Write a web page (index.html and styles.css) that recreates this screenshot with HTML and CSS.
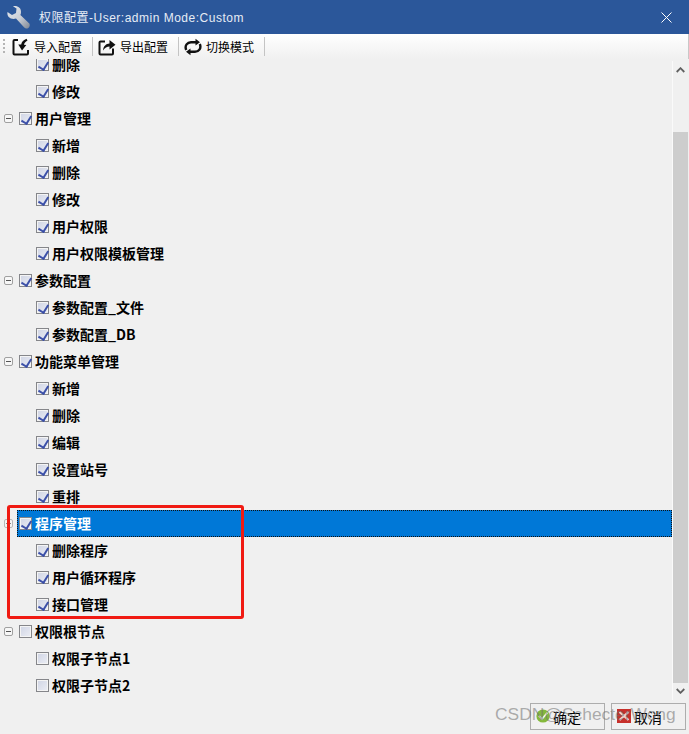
FILE: index.html
```html
<!DOCTYPE html>
<html lang="zh">
<head>
<meta charset="utf-8">
<title>权限配置</title>
<link rel="stylesheet" href="styles.css">
</head>
<body>
<div class="window">
  <header class="titlebar">
    <svg class="wrench" viewBox="0 0 25 25" width="25" height="25"><defs><linearGradient id="wr" x1="0" y1="0" x2="1" y2="1"><stop offset="0" stop-color="#e4e8ee"/><stop offset=".55" stop-color="#c9ced6"/><stop offset="1" stop-color="#7f8794"/></linearGradient></defs><path d="M1.5 7 L6 10 L10 8 L10.5 3.5 L7 1.2 C11 .2 15.5 2.5 15 7.5 C15 8.5 14.8 9.3 14.4 10 L23.3 18.5 C24.6 20.5 23 24 20 23.5 C19.2 23.3 18.6 22.9 18 22.3 L10 13.6 C5 15 .5 12 1.5 7 Z" fill="url(#wr)"/></svg>
    <span class="title">权限配置-User:admin Mode:Custom</span>
    <svg class="close" viewBox="0 0 11 11" width="11" height="11"><path d="M.5 .5 L10.5 10.5 M10.5 .5 L.5 10.5" stroke="#fff" stroke-width="1" fill="none"/></svg>
  </header>
  <nav class="toolbar">
    <span class="grip"></span>
    <span class="tool">
      <svg viewBox="0 0 18 18" width="18" height="18"><path d="M6 2 H2.5 Q1.5 2 1.5 3 V15.5 Q1.5 16.5 2.5 16.5 H15 Q16 16.5 16 15.5 V12" fill="none" stroke="#111" stroke-width="2"/><path d="M14.5 .8 C11 2.2 9.6 4.2 9.2 6.5 L6.3 6.5 L10 12.5 L14.3 7 L12 6.8 C12.2 5 13.4 3.6 15.5 2.5 Z" fill="#111"/></svg>
      导入配置
    </span>
    <span class="tool">
      <svg viewBox="0 0 18 18" width="18" height="18"><path d="M7 3.5 H2.5 Q1.5 3.5 1.5 4.5 V15.5 Q1.5 16.5 2.5 16.5 H14 Q15 16.5 15 15.5 V10.5" fill="none" stroke="#111" stroke-width="2"/><path d="M5 12.5 C5.4 8 8.2 5.7 11.5 5.5 V2 L17.5 6.8 L11.5 11.5 V8.4 C9 8.4 6.8 9.8 5 12.5 Z" fill="#111"/></svg>
      导出配置
    </span>
    <span class="tool">
      <svg viewBox="0 0 18 18" width="18" height="18"><path d="M2.2 12 C.3 7.5 3.5 4.2 7 4.2 H12 M15.8 6 C17.7 10.5 14.5 13.8 11 13.8 H6" fill="none" stroke="#111" stroke-width="2.4"/><path d="M11.5 .8 L16 4.2 L11.5 7.6 Z M6.5 10.4 L2 13.8 L6.5 17.2 Z" fill="#111"/></svg>
      切换模式
    </span>
  </nav>
  <main class="content">
    <div class="tree">
      <ul class="rows">
        <li class="row child"><span class="check on"></span><span class="label">删除</span></li>
        <li class="row child"><span class="check on"></span><span class="label">修改</span></li>
        <li class="row parent"><span class="expander"></span><span class="check on"></span><span class="label">用户管理</span></li>
        <li class="row child"><span class="check on"></span><span class="label">新增</span></li>
        <li class="row child"><span class="check on"></span><span class="label">删除</span></li>
        <li class="row child"><span class="check on"></span><span class="label">修改</span></li>
        <li class="row child"><span class="check on"></span><span class="label">用户权限</span></li>
        <li class="row child"><span class="check on"></span><span class="label">用户权限模板管理</span></li>
        <li class="row parent"><span class="expander"></span><span class="check on"></span><span class="label">参数配置</span></li>
        <li class="row child"><span class="check on"></span><span class="label">参数配置_文件</span></li>
        <li class="row child"><span class="check on"></span><span class="label">参数配置_DB</span></li>
        <li class="row parent"><span class="expander"></span><span class="check on"></span><span class="label">功能菜单管理</span></li>
        <li class="row child"><span class="check on"></span><span class="label">新增</span></li>
        <li class="row child"><span class="check on"></span><span class="label">删除</span></li>
        <li class="row child"><span class="check on"></span><span class="label">编辑</span></li>
        <li class="row child"><span class="check on"></span><span class="label">设置站号</span></li>
        <li class="row child"><span class="check on"></span><span class="label">重排</span></li>
        <li class="row parent selected"><span class="expander"></span><span class="sel"><span class="check on"></span><span class="label">程序管理</span></span></li>
        <li class="row child"><span class="check on"></span><span class="label">删除程序</span></li>
        <li class="row child"><span class="check on"></span><span class="label">用户循环程序</span></li>
        <li class="row child"><span class="check on"></span><span class="label">接口管理</span></li>
        <li class="row parent"><span class="expander"></span><span class="check"></span><span class="label">权限根节点</span></li>
        <li class="row child"><span class="check"></span><span class="label">权限子节点1</span></li>
        <li class="row child"><span class="check"></span><span class="label">权限子节点2</span></li>
      </ul>
    </div>
    <div class="scrollbar">
      <svg class="arrow arrow-up" viewBox="0 0 9 6" width="9" height="6"><path d="M.7 5 L4.5 1.2 L8.3 5" fill="none" stroke="#606060" stroke-width="1.8"/></svg>
      <div class="track"><div class="thumb"></div></div>
      <svg class="arrow arrow-down" viewBox="0 0 9 6" width="9" height="6"><path d="M.7 1 L4.5 4.8 L8.3 1" fill="none" stroke="#606060" stroke-width="1.8"/></svg>
    </div>
  </main>
  <footer class="footer">
    <button class="btn" type="button">
      <svg viewBox="0 0 14 14" width="14" height="14"><circle cx="7" cy="7" r="6.6" fill="#84b83c"/><path d="M3 6.8 L6 10 L11.5 3.5" fill="none" stroke="#f1f7e6" stroke-width="1.8"/></svg>
      <span class="btn-text">确定</span>
    </button>
    <button class="btn" type="button">
      <svg viewBox="0 0 14 14" width="14" height="14"><rect width="14" height="14" fill="#c6302b"/><path d="M2.5 3 L11.5 11 M11.5 3 L2.5 11" stroke="#f3d6d0" stroke-width="2.2"/></svg>
      <span class="btn-text">取消</span>
    </button>
  </footer>
  <div class="annotation"></div>
  <div class="watermark">CSDN@SchecterWong</div>
</div>
</body>
</html>
```
FILE: styles.css
```css
* { box-sizing: border-box; }
html, body { margin: 0; padding: 0; }
body { font-family: "Noto Sans CJK SC", "Liberation Sans", sans-serif; background: #f0f0f0; color: #000; }
.window { position: relative; width: 689px; height: 734px; display: flex; flex-direction: column; overflow: hidden; background: #f0f0f0; }

.titlebar { flex: 0 0 34px; background: #2b579a; display: flex; align-items: center; padding: 0 17px 0 6px; color: #e6ecf5; }
.wrench { flex: none; }
.title { margin: -2px 0 0 8px; font-size: 12px; font-family: "Liberation Sans", "Noto Sans CJK SC", sans-serif; letter-spacing: .5px; flex: 1; }
.close { flex: none; }

.toolbar { flex: 0 0 25px; display: flex; align-items: center; padding-left: 3px; background: linear-gradient(#ffffff, #f0f0f0); border-right: 1px solid #c8c8c8; }
.grip { width: 2px; height: 15px; margin-right: 7px; background: repeating-linear-gradient(#b5b5b5 0 2px, transparent 2px 4px); }
.tool { display: flex; align-items: center; gap: 4px; height: 19px; font-size: 12px; line-height: 19px; padding-right: 10px; margin-right: 5px; border-right: 1px solid #c4c4c4; }
.tool svg { flex: none; }

.content { flex: 1; display: flex; min-height: 0; }
.tree { flex: 1; overflow: hidden; }
.rows { list-style: none; margin: -8px 0 0; padding: 0; }
.row { height: 27px; display: flex; align-items: center; font-size: 14px; font-weight: 700; white-space: nowrap; }
.row.child { padding-left: 36px; }
.row.parent { padding-left: 4px; }
.label { margin-top: -2px; }
.expander { width: 9px; height: 9px; margin-right: 6px; border: 1px solid #a0a0a0; border-radius: 2px; background: linear-gradient(90deg, transparent 1px, #555 1px, #555 6px, transparent 6px) center / 100% 1px no-repeat, #f7f7f7; flex: none; }
.check { width: 13px; height: 13px; margin-right: 3px; border: 1px solid #85868a; box-shadow: inset 0 0 0 1px #f4f4f4; background: linear-gradient(135deg, #cfd4e4, #eceef5); position: relative; flex: none; }
.check.on::after { content: ""; position: absolute; left: 3px; top: 1px; width: 5px; height: 8px; border: solid #3c50a8; border-width: 0 2px 2px 0; transform: rotate(32deg); }
.sel { flex: 1; align-self: stretch; display: flex; align-items: center; margin-left: -2px; height: 27px; background: #0078d7; padding-left: 2px; color: #fff; outline: 1px dotted #111; outline-offset: -1px; }
.selected .expander { opacity: .7; }

.scrollbar { flex: 0 0 17px; display: flex; flex-direction: column; align-items: center; border-left: 1px solid #fafafa; background: #f0f0f0; padding-right: 1px; margin-top: 2px; }
.arrow { flex: none; }
.arrow-up { margin: 6px 0; }
.arrow-down { margin: 5px 0 6px; }
.track { flex: 1; width: 100%; display: flex; flex-direction: column; justify-content: flex-end; min-height: 0; }
.thumb { height: 551px; background: #cdcdcd; }

.footer { flex: 0 0 34px; display: flex; justify-content: flex-end; align-items: flex-start; gap: 6px; padding: 3px 3px 0 0; }
.btn { width: 75px; height: 27px; padding: 0 0 0 5px; display: flex; align-items: center; gap: 3px; background: #f0f0f0; border: 1px solid #adadad; font: 400 14px "Noto Sans CJK SC", sans-serif; color: #000; }
.btn svg { flex: none; margin-top: -1px; }
.btn-text { margin-top: 1px; }

.annotation { position: absolute; left: 7px; top: 505px; width: 237px; height: 114px; border: 3px solid #f01a12; border-radius: 3px; }
.watermark { position: absolute; left: 495px; top: 704px; font: 400 17.4px "Liberation Sans", sans-serif; color: rgba(110, 110, 110, .55); white-space: nowrap; }
```
